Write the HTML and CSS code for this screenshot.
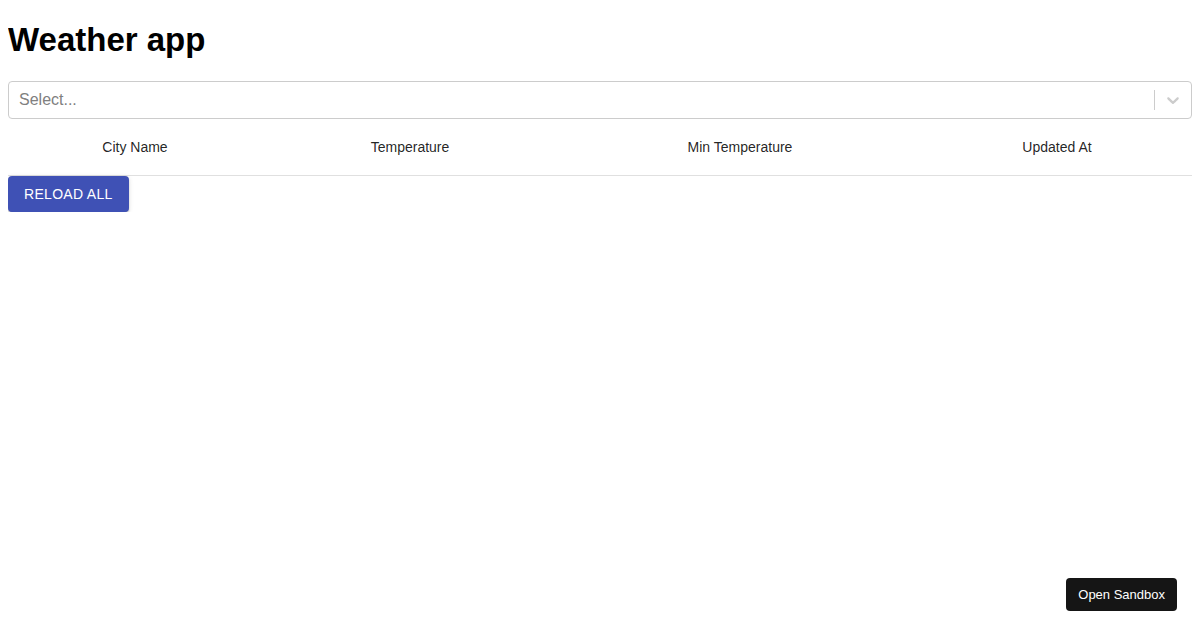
FILE: index.html
```html
<!DOCTYPE html>
<html lang="en">
<head>
    <meta charset="UTF-8">
    <meta name="viewport" content="width=device-width, initial-scale=1.0">
    <title>Weather app</title>
    <link rel="stylesheet" href="styles.css">
</head>
<body>
    <h1>Weather app</h1>

    <div class="select">
        <div class="select-value">Select...</div>
        <div class="select-indicators">
            <span class="select-sep"></span>
            <div class="select-arrow">
                <svg width="20" height="20" viewBox="0 0 20 20" aria-hidden="true">
                    <path d="M4.516 7.548c0.436-0.446 1.043-0.481 1.576 0l3.908 3.747 3.908-3.747c0.533-0.481 1.141-0.446 1.574 0 0.436 0.445 0.408 1.197 0 1.615-0.406 0.418-4.695 4.502-4.695 4.502-0.217 0.223-0.502 0.335-0.787 0.335s-0.57-0.112-0.789-0.335c0 0-4.287-4.084-4.695-4.502s-0.436-1.170 0-1.615z" fill="#ccc"/>
                </svg>
            </div>
        </div>
    </div>

    <table class="weather-table">
        <thead>
            <tr>
                <th class="col-city">City Name</th>
                <th class="col-temp">Temperature</th>
                <th class="col-min">Min Temperature</th>
                <th class="col-updated">Updated At</th>
            </tr>
        </thead>
        <tbody></tbody>
    </table>

    <button class="reload-btn">Reload all</button>

    <a class="sandbox-btn" href="#">Open Sandbox</a>
</body>
</html>
```

FILE: styles.css
```css
body {
    margin: 8px;
    font-family: "Liberation Sans", Arial, sans-serif;
    color: #000;
    background: #fff;
}

h1 {
    font-size: 33px;
    font-weight: bold;
    margin: 13px 0 21px;
}

.select {
    display: flex;
    align-items: center;
    height: 38px;
    box-sizing: border-box;
    border: 1px solid #ccc;
    border-radius: 4px;
    margin-top: 22px;
}

.select-value {
    flex: 1;
    padding: 2px 10px;
    font-size: 16px;
    color: #808080;
}

.select-indicators {
    display: flex;
    align-items: center;
    align-self: stretch;
}

.select-sep {
    width: 1px;
    align-self: stretch;
    margin: 8px 0;
    background: #ccc;
}

.select-arrow {
    display: flex;
    padding: 8px;
}

.weather-table {
    width: 100%;
    border-collapse: collapse;
    table-layout: fixed;
    font-family: "Liberation Sans", Arial, sans-serif;
}

.weather-table th {
    height: 56px;
    padding: 0 16px;
    box-sizing: border-box;
    font-size: 14px;
    font-weight: 400;
    color: rgba(0, 0, 0, 0.87);
    text-align: center;
    border-bottom: 1px solid #e0e0e0;
}

.col-city { width: 254px; }
.col-temp { width: 296px; }
.col-min { width: 364px; }
.col-updated { width: 270px; }

.reload-btn {
    display: block;
    height: 36px;
    padding: 0 16px;
    border: none;
    border-radius: 4px;
    background: #3f51b5;
    color: #fff;
    font-family: "Liberation Sans", Arial, sans-serif;
    font-size: 14px;
    font-weight: 400;
    letter-spacing: 0.3px;
    text-transform: uppercase;
    box-shadow: 0 3px 1px -2px rgba(0,0,0,0.2), 0 2px 2px 0 rgba(0,0,0,0.14), 0 1px 5px 0 rgba(0,0,0,0.12);
    cursor: pointer;
}

.sandbox-btn {
    position: fixed;
    right: 23px;
    bottom: 19px;
    display: flex;
    align-items: center;
    height: 33px;
    padding: 0 12px;
    box-sizing: border-box;
    border-radius: 4px;
    background: #151515;
    color: #fff;
    font-family: "Liberation Sans", Arial, sans-serif;
    font-size: 13px;
    text-decoration: none;
}
```
